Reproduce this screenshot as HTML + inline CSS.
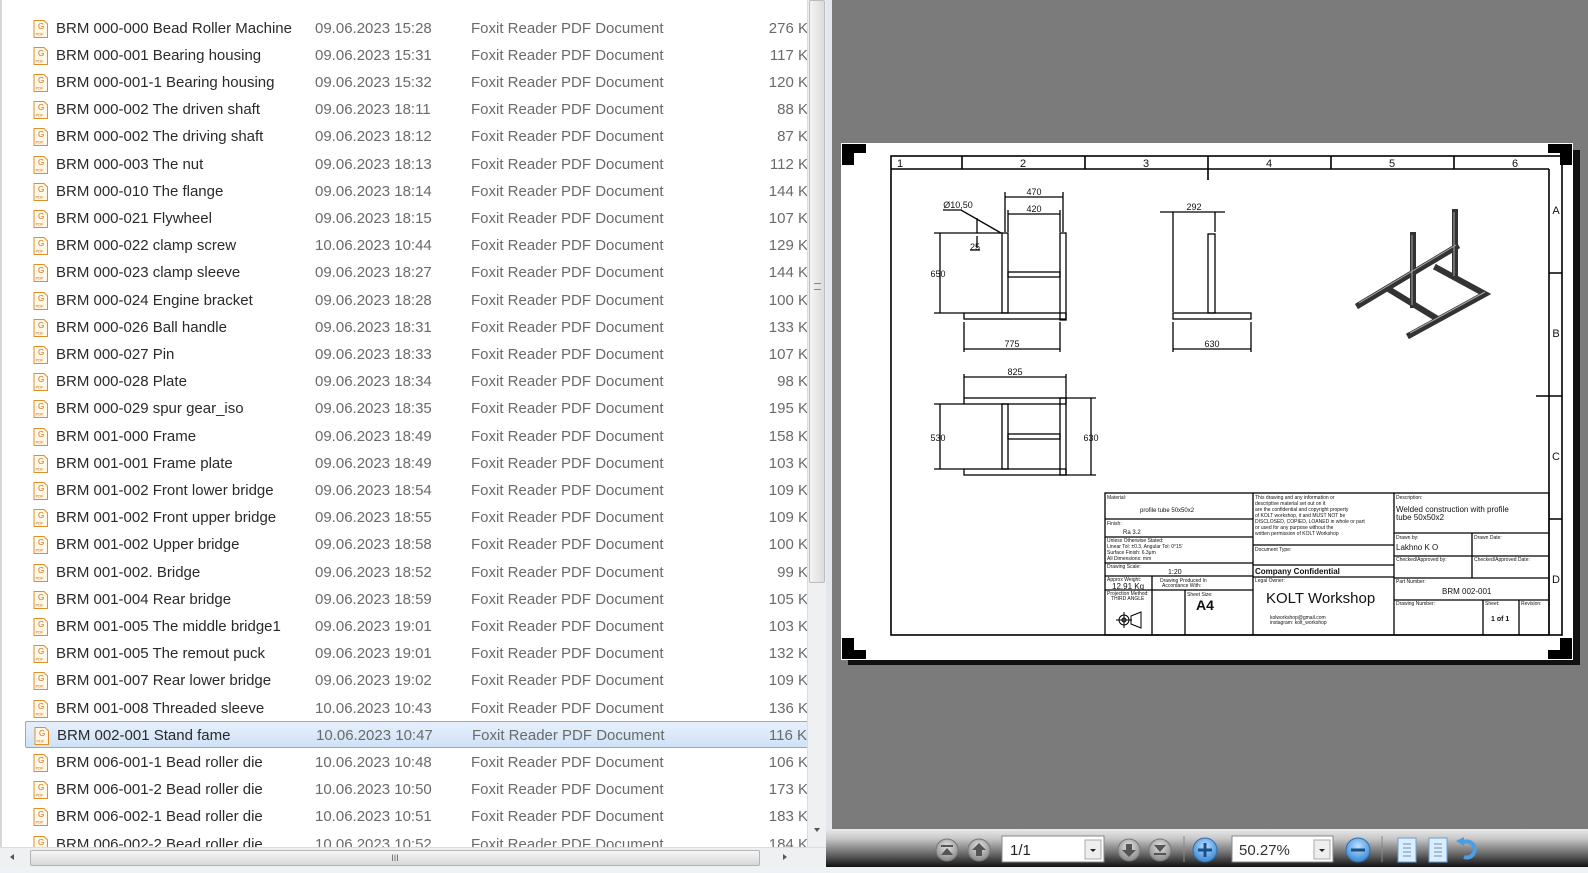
<!DOCTYPE html>
<html><head><meta charset="utf-8">
<style>
*{margin:0;padding:0;box-sizing:border-box}
body{width:1588px;height:873px;overflow:hidden;background:#fff;position:relative;font-family:"Liberation Sans",sans-serif}
#list{position:absolute;left:0;top:0;width:807px;height:847px;overflow:hidden;background:#fff;border-left:2px solid #d6d6d6}
.row{position:absolute;left:0;height:27px;width:900px;font-size:15px;line-height:27px;white-space:nowrap}
.row span{position:absolute;top:0}
.n{left:54px;color:#2a2a2a}
.d{left:313px;color:#6a6a6a}
.t{left:469px;color:#6a6a6a}
.s{right:84px;color:#6a6a6a;text-align:right}
.ic{position:absolute;left:31px;top:5px;width:15px;height:18px}
.sel{background:linear-gradient(#e6f0fb,#d0e2f7);border:1px solid #84acdd;border-radius:2px;left:23px;width:790px}
.sel .ic{left:8px}.sel .n{left:31px}.sel .d{left:290px}.sel .t{left:446px}.sel .s{right:-3px}
#vs{position:absolute;left:807px;top:0;width:19px;height:847px;background:#eef0f2;border-left:1px solid #dcdcdc}
#vthumb{position:absolute;left:1px;top:0;width:16px;height:583px;background:linear-gradient(90deg,#f4f4f4,#dcdcdc);border:1px solid #bcbcbc;border-radius:2px}
#hs{position:absolute;left:0;top:847px;width:826px;height:20px;background:#eef0f2;border-top:1px solid #dcdcdc}
#hthumb{position:absolute;left:30px;top:2px;width:730px;height:16px;background:linear-gradient(#f6f6f6,#d8d8d8);border:1px solid #b4b4b4;border-radius:2px;text-align:center;font-size:9px;line-height:14px;color:#666}
#bot{position:absolute;left:0;top:867px;width:1588px;height:6px;background:#eef2f7}
#gray{position:absolute;left:826px;top:0;width:762px;height:829px;background:#7b7b7b;border-left:6px solid #e4e8ee}
#tb{position:absolute;left:826px;top:829px;width:762px;height:38px;background:linear-gradient(#e9e9e9 0%,#c8c8c8 25%,#6a6a6a 65%,#111 100%)}
svg{position:absolute;left:0;top:0}
</style></head><body>
<div id="list"></div>
<div id="vs"><div id="vthumb"><div style="position:absolute;top:282px;left:4px;width:7px;height:7px;border-top:1px solid #888;border-bottom:1px solid #888"></div></div>
<div style="position:absolute;top:828px;left:6px;border-left:3px solid transparent;border-right:3px solid transparent;border-top:4px solid #555"></div></div>
<div id="hs"><div style="position:absolute;left:10px;top:6px;border-top:3px solid transparent;border-bottom:3px solid transparent;border-right:4px solid #555"></div><div id="hthumb">III</div><div style="position:absolute;left:783px;top:6px;border-top:3px solid transparent;border-bottom:3px solid transparent;border-left:4px solid #555"></div></div>
<div id="gray"></div>
<div id="tb"></div>
<div id="bot"></div>
<svg width="1588" height="873" viewBox="0 0 1588 873" font-family="Liberation Sans, sans-serif">
<rect x="848" y="150" width="732" height="515" fill="#111"/>
<rect x="841" y="143" width="732" height="517" fill="#fff"/>
<path d="M842 144h24v9h-12v12h-12z M842 659h24v-9h-12v-12h-12z M1572 144h-24v9h12v12h12z M1572 659h-24v-9h12v-12h12z" fill="#000"/>
<g fill="none" stroke="#000" stroke-width="1.6">
<rect x="891" y="156" width="671" height="479"/>
<line x1="891" y1="169" x2="1549" y2="169"/>
<line x1="1549" y1="169" x2="1549" y2="635"/>
<path d="M962 156v13M1085 156v13M1208 156v24M1331 156v13M1454 156v13"/>
<path d="M1549 273h13M1536 396h26M1549 519h13"/>
</g>
<g font-size="11" fill="#111" text-anchor="middle">
<text x="900" y="167">1</text><text x="1023" y="167">2</text><text x="1146" y="167">3</text><text x="1269" y="167">4</text><text x="1392" y="167">5</text><text x="1515" y="167">6</text>
<text x="1556" y="214">A</text><text x="1556" y="337">B</text><text x="1556" y="460">C</text><text x="1556" y="583">D</text>
</g>
<g fill="none" stroke="#000" stroke-width="1.3">
<rect x="1002" y="233" width="6" height="80"/>
<rect x="1060" y="233" width="6" height="87"/>
<rect x="1008" y="272" width="52" height="5"/>
<rect x="964" y="313" width="102" height="6"/>
<path d="M1005 197h58M1005 192v40M1063 192v40M1008 214h52M1008 210v22M1060 210v22"/>
<path d="M940 233v80M934 233h68M934 313h30M964 322v30M1060 322v30M964 349h96"/>
<path d="M943 210h18l40 23M977 218v15M977 236v12M970 250h10"/>
<rect x="964" y="398" width="102" height="6"/>
<rect x="964" y="469" width="102" height="6"/>
<rect x="1002" y="404" width="6" height="65"/>
<rect x="1060" y="398" width="6" height="77"/>
<rect x="1008" y="434" width="52" height="5"/>
<path d="M964 374v24M1066 374v24M964 377h102M940 404v65M934 404h30M934 469h30M1091 398v77M1066 398h30M1066 475h30"/>
<rect x="1208" y="234" width="7" height="79"/>
<rect x="1173" y="313" width="78" height="6"/>
<path d="M1173 212v100M1160 212h55M1215 212v20M1215 212h10M1173 322v30M1251 322v30M1173 349h78"/>
</g>
<g font-size="9" fill="#111" text-anchor="middle">
<text x="1034" y="195">470</text><text x="1034" y="212">420</text><text x="958" y="208">Ø10,50</text>
<text x="975" y="250">25</text><text x="938" y="277">650</text><text x="1012" y="347">775</text>
<text x="1015" y="375">825</text><text x="938" y="441">530</text><text x="1091" y="441">630</text>
<text x="1194" y="210">292</text><text x="1212" y="347">630</text>
</g>
<g fill="none" stroke="#333" stroke-width="6" stroke-linecap="square">
<path d="M1359 305L1456 247M1410 335L1485 294L1437 268M1390 290L1436 318M1455 212v64M1413 235v70"/>
</g>
<g fill="none" stroke="#aaa" stroke-width="1">
<path d="M1359 303L1456 245M1410 333L1485 292M1454 212v64M1412 235v70"/>
</g>
<g fill="none" stroke="#000" stroke-width="1.3">
<rect x="1105" y="493" width="444" height="142"/>
<path d="M1253 493v142M1394 493v142"/>
<path d="M1105 519h148M1105 537h148M1105 563h148M1105 576h148M1105 590h148M1152 576v59M1185 590v45"/>
<path d="M1253 545h141M1253 565h141M1253 577h141"/>
<path d="M1394 533h155M1394 556h155M1394 578h155M1394 600h155M1472 533v45M1483 600v35M1519 600v35"/>
</g>
<g font-size="5" fill="#111">
<text x="1107" y="499">Material:</text><text x="1140" y="512" font-size="6">profile tube 50x50x2</text>
<text x="1107" y="525">Finish:</text><text x="1123" y="534" font-size="6">Ra 3.2</text>
<text x="1107" y="542">Unless Otherwise Stated:</text><text x="1107" y="548">Linear Tol: ±0.3, Angular Tol: 0°15'</text><text x="1107" y="554">Surface Finish: 6.3μm</text><text x="1107" y="560">All Dimensions: mm</text>
<text x="1107" y="568">Drawing Scale:</text><text x="1168" y="574" font-size="7">1:20</text>
<text x="1107" y="581">Approx Weight:</text><text x="1112" y="589" font-size="8">12.91 Kg</text>
<text x="1160" y="582">Drawing Produced In</text><text x="1162" y="587">Accordance With:</text>
<text x="1107" y="595">Projection Method:</text><text x="1111" y="600">THIRD ANGLE</text><text x="1187" y="596">Sheet Size:</text>
<text x="1255" y="499">This drawing and any information or</text><text x="1255" y="505">descriptive material set out on it</text><text x="1255" y="511">are the confidential and copyright property</text><text x="1255" y="517">of KOLT workshop, it and MUST NOT be</text><text x="1255" y="523">DISCLOSED, COPIED, LOANED in whole or part</text><text x="1255" y="529">or used for any purpose without the</text><text x="1255" y="535">written permission of KOLT Workshop</text>
<text x="1255" y="551">Document Type:</text><text x="1255" y="582">Legal Owner:</text>
<text x="1270" y="619">kolworkshop@gmail.com</text><text x="1270" y="624">instagram: kolt_workshop</text>
<text x="1396" y="499">Description:</text><text x="1396" y="539">Drawn by:</text><text x="1474" y="539">Drawn Date:</text>
<text x="1396" y="561">Checked/Approved by:</text><text x="1474" y="561">Checked/Approved Date:</text>
<text x="1396" y="583">Part Number:</text><text x="1396" y="605">Drawing Number:</text><text x="1485" y="605">Sheet:</text><text x="1521" y="605">Revision:</text>
</g>
<g fill="#111">
<text x="1196" y="610" font-size="14" font-weight="bold">A4</text>
<text x="1255" y="574" font-size="8" font-weight="bold">Company Confidential</text>
<text x="1266" y="603" font-size="15">KOLT Workshop</text>
<text x="1396" y="512" font-size="8">Welded construction with profile</text><text x="1396" y="520" font-size="8">tube 50x50x2</text>
<text x="1396" y="550" font-size="8">Lakhno K O</text>
<text x="1442" y="594" font-size="8">BRM 002-001</text>
<text x="1491" y="621" font-size="7" font-weight="bold">1 of 1</text>
</g>
<g fill="none" stroke="#000" stroke-width="1"><circle cx="1124" cy="620" r="5"/><circle cx="1124" cy="620" r="2"/><path d="M1116 620h16M1124 612v16M1131 616l10-4v16l-10-4z"/></g>
<defs><radialGradient id="gb" cx="50%" cy="35%" r="60%"><stop offset="0" stop-color="#e4e4e4"/><stop offset="1" stop-color="#8f8f8f"/></radialGradient>
<radialGradient id="bb" cx="50%" cy="35%" r="60%"><stop offset="0" stop-color="#bfe0ff"/><stop offset="1" stop-color="#3f8ed8"/></radialGradient></defs>
<g fill="url(#gb)" stroke="#777" stroke-width="1">
<circle cx="947" cy="850" r="11"/><circle cx="979" cy="850" r="11"/><circle cx="1129" cy="850" r="11"/><circle cx="1160" cy="850" r="11"/>
</g>
<g fill="#555"><path d="M941 845h12v2h-12zM947 848l-6 7h12z"/><path d="M979 843l-7 7h4v6h6v-6h4z"/><path d="M1129 857l-7-7h4v-6h6v6h4z"/><path d="M1154 853h12v2h-12zM1160 852l-6-7h12z"/></g>
<rect x="1002" y="836" width="102" height="26" fill="#fff" stroke="#888"/><text x="1010" y="855" font-size="15" fill="#222">1/1</text>
<rect x="1085" y="840" width="16" height="19" fill="#eee" stroke="#aaa"/><path d="M1090 849h6l-3 3z" fill="#222"/>
<rect x="1232" y="836" width="101" height="26" fill="#fff" stroke="#888"/><text x="1239" y="855" font-size="15" fill="#333">50.27%</text>
<rect x="1314" y="840" width="16" height="19" fill="#eee" stroke="#aaa"/><path d="M1319 849h6l-3 3z" fill="#222"/>
<path d="M1184 836v26M1382 836v26" stroke="#888"/>
<circle cx="1205" cy="850" r="12" fill="url(#bb)" stroke="#2f6fb0"/><path d="M1198 850h14M1205 843v14" stroke="#1a4f8a" stroke-width="3"/>
<circle cx="1358" cy="850" r="12" fill="url(#bb)" stroke="#2f6fb0"/><path d="M1351 850h14" stroke="#1a4f8a" stroke-width="3"/>
<rect x="1398" y="838" width="18" height="24" fill="#dbeeff" stroke="#6aa0d0"/><path d="M1403 844h8M1403 848h8M1403 852h8M1403 856h8" stroke="#6a8fb5"/>
<rect x="1429" y="838" width="18" height="24" fill="#dbeeff" stroke="#6aa0d0"/><path d="M1434 844h8M1434 848h8M1434 852h8M1434 856h8" stroke="#6a8fb5"/>
<path d="M1462 843a8 8 0 1 1 2 14" fill="none" stroke="#4a9de6" stroke-width="4"/><path d="M1456 841l8-4v9z" fill="#4a9de6"/>
</svg>
<script>
var d=[["BRM 000-000 Bead Roller Machine","09.06.2023 15:28","276"],["BRM 000-001 Bearing housing","09.06.2023 15:31","117"],["BRM 000-001-1 Bearing housing","09.06.2023 15:32","120"],["BRM 000-002 The driven shaft","09.06.2023 18:11","88"],["BRM 000-002 The driving shaft","09.06.2023 18:12","87"],["BRM 000-003 The nut","09.06.2023 18:13","112"],["BRM 000-010 The flange","09.06.2023 18:14","144"],["BRM 000-021 Flywheel","09.06.2023 18:15","107"],["BRM 000-022 clamp screw","10.06.2023 10:44","129"],["BRM 000-023 clamp sleeve","09.06.2023 18:27","144"],["BRM 000-024 Engine bracket","09.06.2023 18:28","100"],["BRM 000-026 Ball handle","09.06.2023 18:31","133"],["BRM 000-027 Pin","09.06.2023 18:33","107"],["BRM 000-028 Plate","09.06.2023 18:34","98"],["BRM 000-029 spur gear_iso","09.06.2023 18:35","195"],["BRM 001-000 Frame","09.06.2023 18:49","158"],["BRM 001-001 Frame plate","09.06.2023 18:49","103"],["BRM 001-002 Front lower bridge","09.06.2023 18:54","109"],["BRM 001-002 Front upper bridge","09.06.2023 18:55","109"],["BRM 001-002 Upper bridge","09.06.2023 18:58","100"],["BRM 001-002. Bridge","09.06.2023 18:52","99"],["BRM 001-004 Rear bridge","09.06.2023 18:59","105"],["BRM 001-005 The middle bridge1","09.06.2023 19:01","103"],["BRM 001-005 The remout puck","09.06.2023 19:01","132"],["BRM 001-007 Rear lower bridge","09.06.2023 19:02","109"],["BRM 001-008 Threaded sleeve","10.06.2023 10:43","136"],["BRM 002-001 Stand fame","10.06.2023 10:47","116"],["BRM 006-001-1 Bead roller die","10.06.2023 10:48","106"],["BRM 006-001-2 Bead roller die","10.06.2023 10:50","173"],["BRM 006-002-1 Bead roller die","10.06.2023 10:51","183"],["BRM 006-002-2 Bead roller die","10.06.2023 10:52","184"]];
var ic='<svg class="ic" viewBox="0 0 15 18"><path d="M1 .5h10l3.5 3.5v13.5h-13.5z" fill="#fff7e8" stroke="#e0902a"/><text x="5" y="9" font-size="8" fill="#d07010" font-family="Liberation Sans">G</text><text x="2.5" y="15.5" font-size="4" fill="#d07010" font-family="Liberation Sans">PDF</text></svg>';
var h='';d.forEach(function(r,i){var y=Math.round(14.5+i*27.2);var c=i==26?'row sel':'row';h+='<div class="'+c+'" style="top:'+(i==26?y-1:y)+'px">'+ic+'<span class="n">'+r[0]+'</span><span class="d">'+r[1]+'</span><span class="t">Foxit Reader PDF Document</span><span class="s">'+r[2]+' KB</span></div>';});
document.getElementById('list').innerHTML=h;
</script>
</body></html>
